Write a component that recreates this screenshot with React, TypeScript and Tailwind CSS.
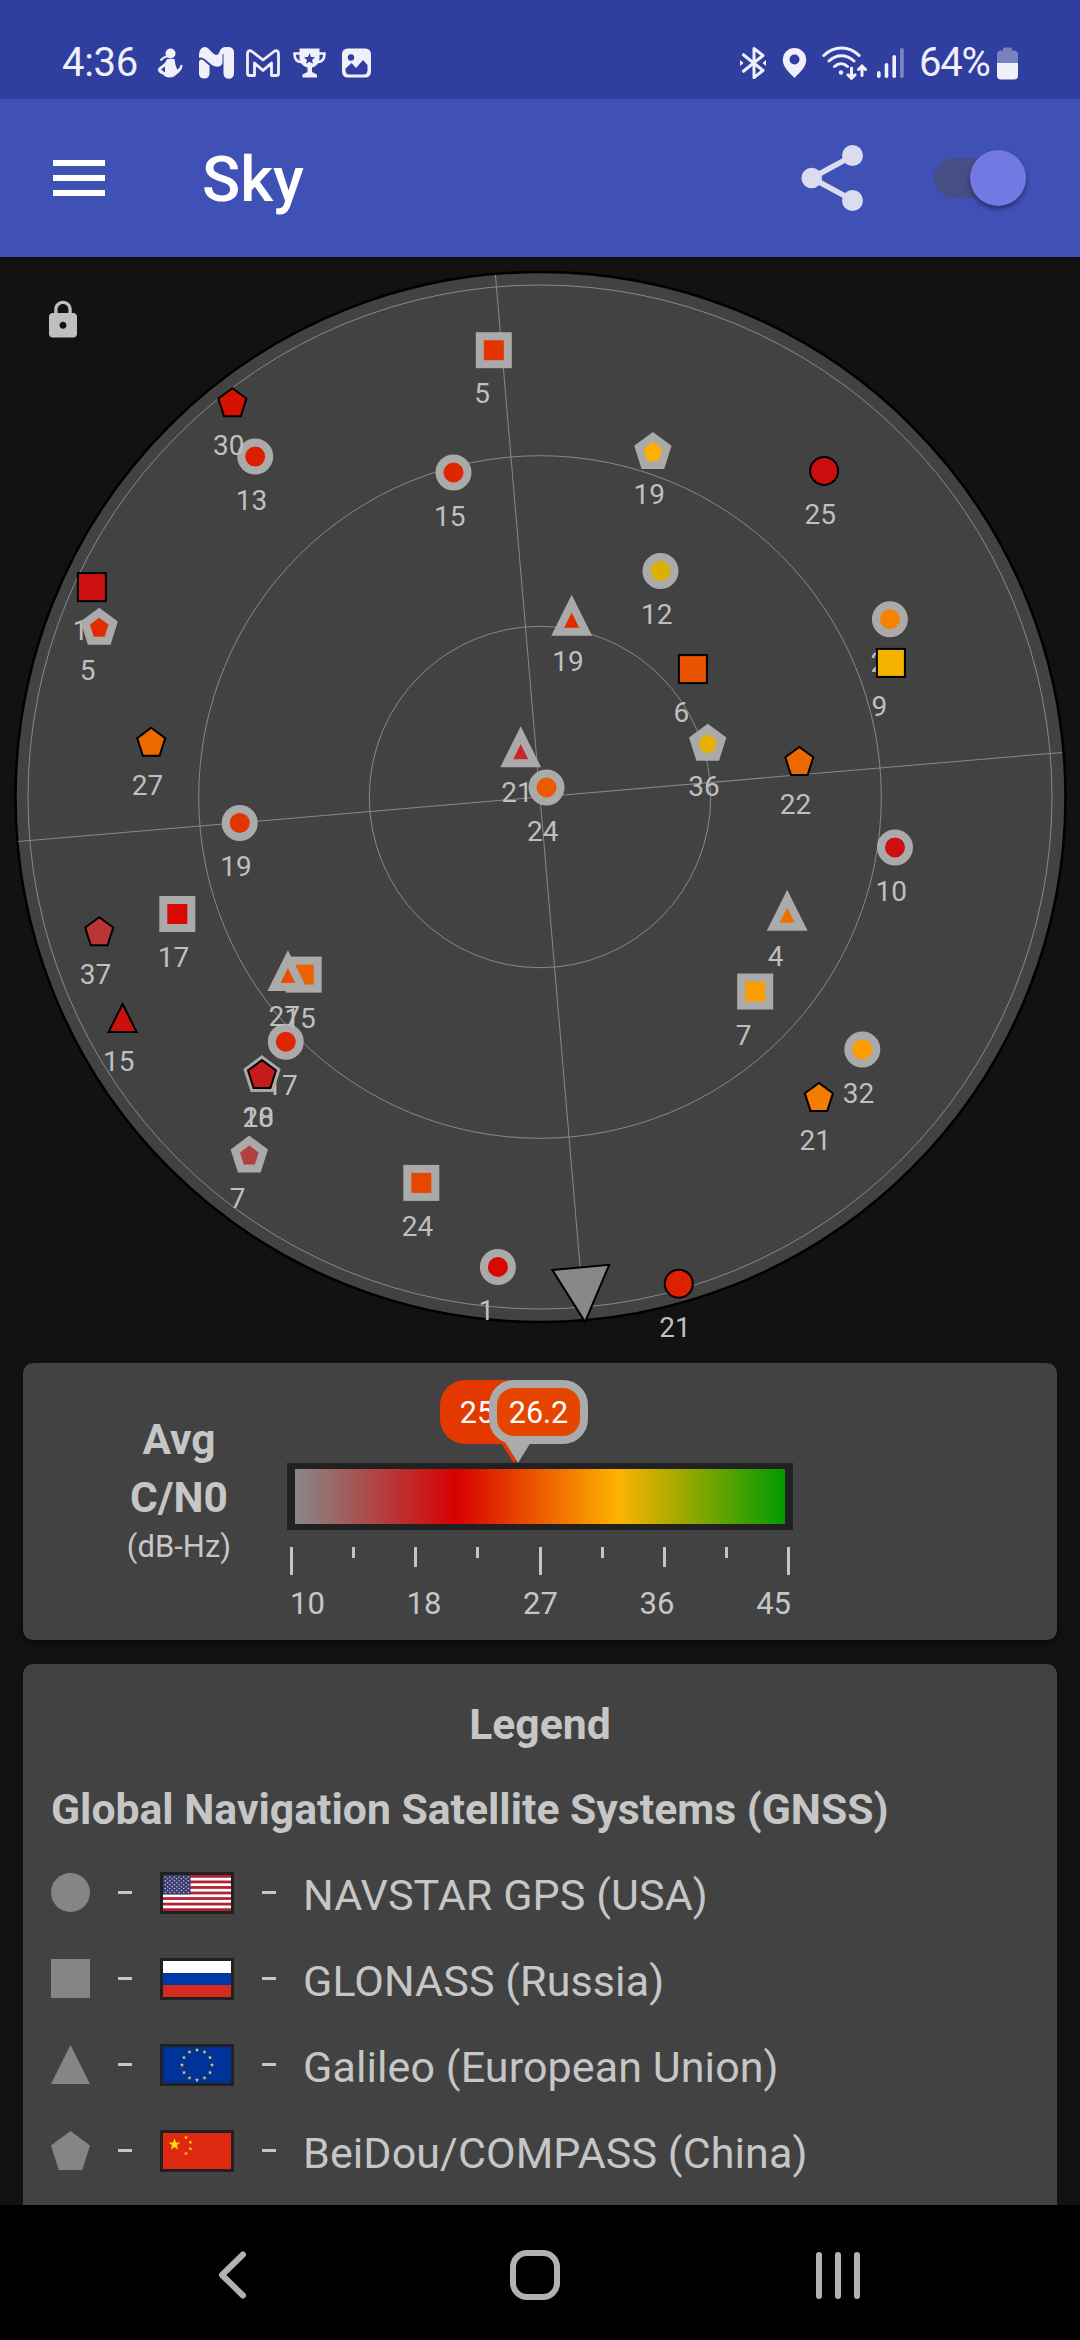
import React, { useState } from "react";

type Shape = "circle" | "square" | "triangle" | "pentagon";

interface Satellite {
  id: string;
  shape: Shape;
  x: number;
  y: number;
  color: string;
  used?: boolean;
}

const SATELLITES: Satellite[] = [
  { id: "5", shape: "square", x: 493.8, y: 350.2, color: "#e33500", used: true },
  { id: "15", shape: "circle", x: 453.5, y: 472.5, color: "#de2600", used: true },
  { id: "13", shape: "circle", x: 255.2, y: 456.6, color: "#dd1d00", used: true },
  { id: "30", shape: "pentagon", x: 232.4, y: 402.2, color: "#d51200" },
  { id: "1", shape: "square", x: 91.9, y: 587.1, color: "#cc0f10" },
  { id: "5", shape: "pentagon", x: 99.2, y: 626.7, color: "#e02d00", used: true },
  { id: "27", shape: "pentagon", x: 151.2, y: 741.8, color: "#ec6900" },
  { id: "21", shape: "triangle", x: 520.7, y: 749.3, color: "#c42828", used: true },
  { id: "24", shape: "circle", x: 546.5, y: 787.5, color: "#ea5a00", used: true },
  { id: "19", shape: "pentagon", x: 652.9, y: 450.9, color: "#ffb000", used: true },
  { id: "25", shape: "circle", x: 824.1, y: 470.9, color: "#cc0d0d" },
  { id: "12", shape: "circle", x: 660.5, y: 571, color: "#dcb000", used: true },
  { id: "19", shape: "triangle", x: 571.7, y: 617.8, color: "#e02a00", used: true },
  { id: "6", shape: "square", x: 692.9, y: 669.1, color: "#e85400" },
  { id: "2", shape: "circle", x: 889.9, y: 619.2, color: "#f48400", used: true },
  { id: "9", shape: "square", x: 890.9, y: 662.9, color: "#f5b200" },
  { id: "36", shape: "pentagon", x: 707.7, y: 742.7, color: "#e8b000", used: true },
  { id: "22", shape: "pentagon", x: 799.3, y: 760.9, color: "#ec6800" },
  { id: "19", shape: "circle", x: 239.7, y: 822.9, color: "#e23500", used: true },
  { id: "17", shape: "square", x: 177.3, y: 914, color: "#d80a00", used: true },
  { id: "37", shape: "pentagon", x: 99.2, y: 931.2, color: "#b83535" },
  { id: "15", shape: "triangle", x: 122.6, y: 1018, color: "#cc1010" },
  { id: "17", shape: "circle", x: 285.8, y: 1041.7, color: "#de2600", used: true },
  { id: "15", shape: "square", x: 303.7, y: 974.6, color: "#ec6200", used: true },
  { id: "27", shape: "triangle", x: 287.9, y: 973.1, color: "#e85000", used: true },
  { id: "20", shape: "pentagon", x: 262, y: 1074.1, color: "#c41c1c", used: true },
  { id: "18", shape: "pentagon", x: 262, y: 1074.1, color: "#c41c1c" },
  { id: "7", shape: "pentagon", x: 249.3, y: 1154.6, color: "#b04040", used: true },
  { id: "24", shape: "square", x: 421.3, y: 1182.9, color: "#e64600", used: true },
  { id: "1", shape: "circle", x: 497.9, y: 1267, color: "#d80a00", used: true },
  { id: "10", shape: "circle", x: 895, y: 847.4, color: "#cc0f10", used: true },
  { id: "4", shape: "triangle", x: 787.2, y: 912.8, color: "#ee7000", used: true },
  { id: "7", shape: "square", x: 755.2, y: 991.5, color: "#fb9d00", used: true },
  { id: "32", shape: "circle", x: 862.3, y: 1049.4, color: "#fb9d00", used: true },
  { id: "21", shape: "pentagon", x: 818.9, y: 1096.9, color: "#f47c00" },
  { id: "21", shape: "circle", x: 678.8, y: 1283.7, color: "#de1f00" },
];

const SatelliteShape = ({ shape, r }: { shape: Shape; r: number }) => {
  switch (shape) {
    case "circle":
      return <circle r={r} />;
    case "square":
      return <rect x={-r} y={-r} width={r * 2} height={r * 2} />;
    case "triangle":
      return <path d={`M0 ${-r}L${r} ${r}H${-r}Z`} />;
    default:
      return (
        <path
          d={`M0 ${-r}L${r} ${-r * 0.26}L${r * 0.6} ${r}H${-r * 0.6}L${-r} ${-r * 0.26}Z`}
        />
      );
  }
};

const StatusBar = () => (
  <div className="flex h-[99px] items-center bg-[#303f9f] pl-[62px] pr-[62px] pt-[27px] text-[#eff0fa]">
    <span className="w-[76px] whitespace-nowrap text-[40px] leading-[40px] tracking-[-0.3px]">4:36</span>
    <svg className="ml-[19px]" width="26" height="30" viewBox="0 0 26 30" fill="currentColor">
      <circle cx="13.5" cy="5.5" r="5" />
      <path d="M10 11h7.5l1 6c.5 2 1.500 3 1.500 4.500 1.500-.5 3.200-2.300 3.500-4.500h2c.2 4-2.500 7-5.500 9-2 2.500-4.500 3.500-7.500 3.500-3 0-5-1-6.500-3-2.500-1-5-2.300-5-4.500C0 20 5 18 8.500 14ZM4 21.500l4 3v-6Z" fillRule="evenodd" />
      <path d="M3.500 12.500c3-3.500 6-4.500 10-4.500" fill="none" stroke="currentColor" strokeWidth="2.200" />
    </svg>
    <svg className="ml-[16px]" width="35" height="32" viewBox="0 0 35 32" fill="currentColor">
      <path d="M0 14.500c3-4.500 5 0 9 3l1.500 1V27a5.300 5.300 0 0 1-10.500 0Z" />
      <path d="M0 9C0 3 2.500 0 6 0s5 4 9 7c4 2 5 0 8.500-1V15c0 5-6 6-10.500 3S4 9 0 11Z" />
      <path d="M24.500 7c0-4 2-7 5-7S35 2 35 6v20.500a5 5 0 0 1-10.500 0Z" />
      <path d="M18 8.500C21 7 20 0 27 0h3v7h-7Z" />
    </svg>
    <svg className="ml-[12px]" width="34" height="28" viewBox="0 0 34 28" fill="none" stroke="currentColor" strokeWidth="2.800" strokeLinejoin="round">
      <path d="M1.500 4.500C1.500 1.500 4 1 6 2.500l11 8.500 11-8.500c2-1.500 4.500-1 4.500 2V24.500q0 2-2 2h-5V14L17 21.500 8.500 14v12.500h-5q-2 0-2-2Z" />
    </svg>
    <svg className="ml-[13px]" width="33" height="30" viewBox="0 0 33 30">
      <path d="M7 5.500H1.500c0 5 2 8.500 7 8.500M26 5.500h5.500c0 5-2 8.500-7 8.500" fill="none" stroke="currentColor" strokeWidth="2.600" />
      <path d="M6.500 0.500h20v9c0 6-3 8.500-7.500 10v4.500l5 2.500v3H9.500v-3l5-2.500v-4.500c-4.500-1.500-8-4-8-10Z" fill="currentColor" />
      <path d="m16.500 5.300 1.500 3.700 4 .3-3 2.600 1 3.900-3.500-2.100-3.500 2.100 1-3.900-3-2.600 4-.3Z" fill="#303f9f" />
    </svg>
    <svg className="ml-[16px]" width="29" height="30" viewBox="0 0 29 30">
      <rect y=".5" width="29" height="29" rx="5.500" fill="currentColor" />
      <circle cx="9" cy="9.500" r="3.200" fill="#303f9f" />
      <path d="M3.500 22v-1.500l6-5.500 4.500 5 7-8 4.500 5V22q0 4.500-4 4.500h-14q-4 0-4-4.500Z" fill="#303f9f" />
    </svg>

    <div className="ml-auto flex items-center">
      <svg width="28" height="34" viewBox="0 0 28 34" fill="none" stroke="currentColor" strokeWidth="3" strokeLinejoin="round">
        <path d="M3.500 8 24 24.500l-9 7V2.500l9 7L3.500 26" />
        <path d="m1 14 3.500 3L1 20ZM27 14l-3.500 3 3.500 3Z" fill="currentColor" stroke="none" />
      </svg>
      <svg className="ml-[15px]" width="25" height="32" viewBox="0 0 25 32" fill="currentColor" fillRule="evenodd">
        <path d="M12.500 1A11.700 11.700 0 0 1 24.200 12.700C24.200 20 18 25 12.500 31 7 25 .8 20 .8 12.700A11.700 11.700 0 0 1 12.500 1Zm0 6.500a5 5 0 1 0 0 10 5 5 0 0 0 0-10Z" />
      </svg>
      <svg className="ml-[15px]" width="46" height="34" viewBox="0 0 46 34" fill="none" stroke="currentColor" strokeWidth="3" strokeLinecap="round">
        <path d="M1.800 9.500C12-.5 27-.5 37.200 9.500M7 15c7.500-7 17.500-7 25 0M12.500 20.500c4-3.700 9-3.700 13 0" />
        <circle cx="19" cy="26.500" r="2.200" fill="currentColor" stroke="none" />
        <path d="M29.500 22v9M26 28.800l3.500 3.400 3.500-3.400M40 29.500v-9M36.500 23.500 40 20l3.500 3.500" />
      </svg>
      <svg className="ml-[9px]" width="28" height="32" viewBox="0 0 28 32" fill="currentColor">
        <rect x="0" y="24" width="3.600" height="7" rx="1.800" />
        <rect x="7.700" y="16" width="3.600" height="15" rx="1.800" />
        <rect x="15.400" y="8" width="3.600" height="23" rx="1.800" />
        <rect x="23.100" y="1" width="3.600" height="30" rx="1.800" opacity=".4" />
      </svg>
      <span className="ml-[14px] w-[72px] whitespace-nowrap text-[40px] leading-[40px] tracking-[-1.2px]">64%</span>
      <svg className="ml-[6px]" width="21" height="33" viewBox="0 0 21 33" fill="currentColor">
        <path opacity=".38" d="M6 3.500V2q0-1.500 1.500-1.500h6Q15 .5 15 2v1.500h2q4 0 4 4V16H0V7.500q0-4 4-4Z" />
        <path d="M0 16h21v12.500q0 4-4 4H4q-4 0-4-4Z" />
      </svg>
    </div>
  </div>
);

const AppBar = () => {
  const [enabled, setEnabled] = useState(true);

  return (
    <header className="flex h-[158px] items-center bg-[#3f51b5] pl-[53px] pr-[54px]">
      <button className="flex w-[52px] flex-col gap-[9px]" aria-label="Menu">
        <span className="h-[6px] bg-white" />
        <span className="h-[6px] bg-white" />
        <span className="h-[6px] bg-white" />
      </button>
      <h1 className="ml-[97px] mt-[4px] text-[63px] font-medium leading-[70px] text-white">Sky</h1>
      <svg className="ml-auto" width="62" height="68" viewBox="0 0 62 68" fill="#dadcf0">
        <path d="M52 11.700 10.700 34 52 56.300" fill="none" stroke="#dadcf0" strokeWidth="5.500" />
        <circle cx="10.700" cy="34" r="10.300" />
        <circle cx="51.500" cy="11.500" r="10.500" />
        <circle cx="51.500" cy="56.500" r="10.500" />
      </svg>
      <button
        className={`ml-[71px] flex h-[40px] w-[92px] items-center rounded-full bg-[#474d85] ${enabled ? "justify-end" : "justify-start"}`}
        onClick={() => setEnabled((prev) => !prev)}
        aria-label="GPS"
      >
        <span className="h-[56px] w-[56px] shrink-0 rounded-full bg-[#7379e2] shadow-[0_3px_5px_rgba(0,0,0,0.4)]" />
      </button>
    </header>
  );
};

const SkyView = () => (
  <svg className="block" width="1080" height="1106" viewBox="0 257 1080 1106">
    <circle cx="540.500" cy="797" r="525" fill="#424242" stroke="#000" strokeWidth="2.500" />
    <g fill="none" stroke="#888" strokeWidth="1">
      <circle cx="540" cy="797" r="512" />
      <circle cx="540" cy="797" r="341.300" />
      <circle cx="540" cy="797" r="170.700" />
      <g transform="rotate(-4.880 540 797)">
        <path d="M540 273V1321M16 797H1064" />
      </g>
    </g>
    <path d="M552.400 1270 609.200 1264.800 585.100 1322Z" fill="#888" stroke="#000" strokeWidth="2" />
    {SATELLITES.map((sat, index) => (
      <g key={index} transform={`translate(${sat.x} ${sat.y})`}>
        <g fill={sat.color} stroke={sat.used ? "#aaa" : "#000"} strokeWidth={sat.used ? 8 : 2}>
          <SatelliteShape shape={sat.shape} r={14} />
        </g>
        <text x="-19.500" y="53.200" fontSize="28" fill="#bfbfbf">
          {sat.id}
        </text>
      </g>
    ))}
    {/* lock */}
    <g transform="translate(42 299) scale(1.750)">
      <path
        fill="#bfbfbf"
        d="M18 8h-1V6c0-2.760-2.240-5-5-5S7 3.240 7 6v2H6c-1.100 0-2 .9-2 2v10c0 1.100.9 2 2 2h12c1.100 0 2-.9 2-2V10c0-1.100-.9-2-2-2zm-6 9c-1.100 0-2-.9-2-2s.9-2 2-2 2 .9 2 2-.9 2-2 2zm3.100-9H8.900V6c0-1.710 1.390-3.100 3.100-3.100s3.100 1.390 3.100 3.100v2z"
      />
    </g>
  </svg>
);

const TICKS = [28, 11, 20, 11, 28, 11, 20, 11, 28];
const TICK_LABELS = ["10", "18", "27", "36", "45"];

const SignalCard = () => (
  <section className="mx-[23px] flex h-[277px] rounded-[10px] bg-[#424242] text-[#c6c6c6] shadow-[0_2px_6px_rgba(0,0,0,0.6)]">
    <div className="ml-[96px] mt-[48px] flex w-[120px] flex-col items-center whitespace-nowrap">
      <span className="text-[42.5px] font-bold leading-[58px]">Avg</span>
      <span className="text-[42.5px] font-bold leading-[58px]">C/N0</span>
      <span className="text-[31px] leading-[40px]">(dB-Hz)</span>
    </div>
    <div className="relative ml-[48px] mt-[100px] w-[506px]">
      <div className="h-[67px] border-x-[8px] border-y-[6px] border-[#212121] bg-[linear-gradient(90deg,#888888_0%,#d80000_33%,#ffb300_66%,#009a00_100%)] bg-origin-content" />
      <div className="ml-[3px] mt-[17px] flex w-[500px] items-start justify-between">
        {TICKS.map((height, index) => (
          <span key={index} className="w-[3px] bg-[#c4c4c4]" style={{ height }} />
        ))}
      </div>
      <div className="ml-[3px] mt-[11px] flex w-[501px] justify-between text-[31px] leading-[36px]">
        {TICK_LABELS.map((label) => (
          <span key={label}>{label}</span>
        ))}
      </div>
      <div className="absolute left-[153px] top-[-83px] flex h-[64px] w-[99px] items-center justify-center rounded-[25px] bg-[#e33800] pt-[2px] text-[30.5px] text-white">
        25.9
        <svg className="absolute left-[61px] top-[63px]" width="26" height="20" viewBox="0 0 26 20" fill="#e33800">
          <path d="M0 0h26L13 20Z" />
        </svg>
      </div>
      <div className="absolute left-[202px] top-[-83px] flex h-[64px] w-[99px] items-center justify-center rounded-[25px] border-[8px] border-[#aaa] bg-[#e64500] pt-[2px] text-[30.5px] text-white">
        26.2
        <svg className="absolute left-[8px] top-[54px]" width="26" height="21" viewBox="0 0 26 21" fill="#aaa">
          <path d="M0 0h26L13 21Z" />
        </svg>
      </div>
    </div>
  </section>
);

const LegendShape = ({ shape }: { shape: Shape }) => (
  <svg className="mb-2" width="39" height="39" viewBox="-19.500 -19.500 39 39" fill="#858585">
    <SatelliteShape shape={shape} r={19.5} />
  </svg>
);

const star = (cx: number, cy: number, r: number) =>
  Array.from({ length: 10 }, (_, i) => {
    const angle = (Math.PI * i) / 5 - Math.PI / 2;
    const radius = i % 2 ? r * 0.4 : r;
    return `${cx + radius * Math.cos(angle)},${cy + radius * Math.sin(angle)}`;
  }).join(" ");

const UsaFlag = () => (
  <>
    <rect width="68" height="36" fill="#fff" />
    {[0, 1, 2, 3, 4, 5, 6].map((i) => (
      <rect key={i} y={(i * 2 * 36) / 13} width="68" height={36 / 13} fill="#b22234" />
    ))}
    <rect width="27.500" height="19.400" fill="#3c3b6e" />
    {[0, 1, 2, 3, 4, 5, 6, 7, 8].map((row) =>
      Array.from({ length: row % 2 ? 5 : 6 }, (_, col) => (
        <circle key={`${row}-${col}`} cx={2.300 + col * 4.600 + (row % 2 ? 2.300 : 0)} cy={1.900 + row * 1.950} r=".75" fill="#c8c8dc" />
      ))
    )}
  </>
);

const RussiaFlag = () => (
  <>
    <rect width="68" height="36" fill="#fff" />
    <rect y="12" width="68" height="12" fill="#0039a6" />
    <rect y="24" width="68" height="12" fill="#d52b1e" />
  </>
);

const EuFlag = () => (
  <>
    <rect width="68" height="36" fill="#003399" />
    {Array.from({ length: 12 }, (_, i) => (
      <polygon
        key={i}
        points={star(34 + 15 * Math.sin((i * Math.PI) / 6), 18 - 15 * Math.cos((i * Math.PI) / 6), 2.2)}
        fill="#e8d040"
      />
    ))}
  </>
);

const ChinaFlag = () => (
  <>
    <rect width="68" height="36" fill="#de2910" />
    <polygon points={star(11.5, 11.5, 6.2)} fill="#ffde00" />
    <polygon points={star(23, 4.5, 2.2)} fill="#ffc800" />
    <polygon points={star(27.5, 9.3, 2.2)} fill="#ffc800" />
    <polygon points={star(27.5, 15.8, 2.2)} fill="#ffc800" />
    <polygon points={star(23, 20.5, 2.2)} fill="#ffc800" />
  </>
);

const SYSTEMS: { name: string; shape: Shape; Flag: () => React.ReactNode }[] = [
  { name: "NAVSTAR GPS (USA)", shape: "circle", Flag: UsaFlag },
  { name: "GLONASS (Russia)", shape: "square", Flag: RussiaFlag },
  { name: "Galileo (European Union)", shape: "triangle", Flag: EuFlag },
  { name: "BeiDou/COMPASS (China)", shape: "pentagon", Flag: ChinaFlag },
];

const LegendCard = () => (
  <section className="mx-[23px] mt-6 h-[541px] rounded-t-[10px] bg-[#424242] pl-[28px] pt-[35px] text-[42.7px] leading-[50px] text-[#c6c6c6]">
    <h2 className="mr-[28px] text-center font-bold">Legend</h2>
    <h3 className="mt-[35px] font-bold">Global Navigation Satellite Systems (GNSS)</h3>
    <ul className="mt-[19px] text-[43px] tracking-[0.1px]">
      {SYSTEMS.map(({ name, shape, Flag }) => (
        <li key={name} className="flex h-[86px] items-center">
          <LegendShape shape={shape} />
          <span className="mb-2 ml-[28px] h-[3px] w-[14px] bg-[#c6c6c6]" />
          <svg className="mb-[6px] ml-[28px] border-[3px] border-[#212121]" width="74" height="42" viewBox="0 0 68 36">
            <Flag />
          </svg>
          <span className="mb-2 ml-[28px] h-[3px] w-[14px] bg-[#c6c6c6]" />
          <span className="mb-[2px] ml-[27px]">{name}</span>
        </li>
      ))}
    </ul>
  </section>
);

const NavigationBar = () => (
  <nav className="flex h-[135px] items-center bg-black pl-[218px] pt-[5px]">
    <svg width="30" height="50" viewBox="0 0 30 50" fill="none" stroke="#b2b2b2" strokeWidth="6" strokeLinecap="round" strokeLinejoin="round">
      <path d="M25 4.500 4 25 25 45.500" />
    </svg>
    <div className="ml-[262px] h-[50px] w-[50px] rounded-[17px] border-[6px] border-[#b2b2b2]" />
    <div className="ml-[256px] flex gap-[13px]">
      <span className="h-[47px] w-[6px] rounded-full bg-[#b2b2b2]" />
      <span className="h-[47px] w-[6px] rounded-full bg-[#b2b2b2]" />
      <span className="h-[47px] w-[6px] rounded-full bg-[#b2b2b2]" />
    </div>
  </nav>
);

export default function App() {
  return (
    <div className="h-[2340px] w-[1080px] overflow-hidden bg-[#121212] font-[Roboto,sans-serif]">
      <StatusBar />
      <AppBar />
      <SkyView />
      <SignalCard />
      <LegendCard />
      <NavigationBar />
    </div>
  );
}
